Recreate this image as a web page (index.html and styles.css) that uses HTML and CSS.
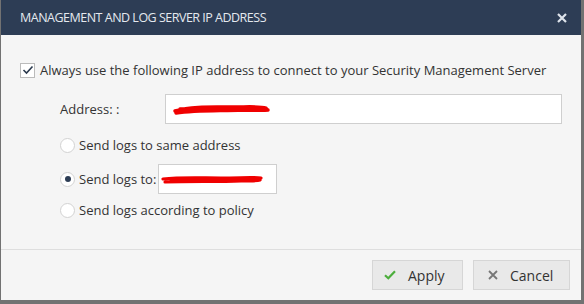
FILE: index.html
```html
<!DOCTYPE html>
<html lang="en">
  <head>
    <meta charset="UTF-8" />
    <title>Management and Log Server IP Address</title>
    <link rel="stylesheet" href="styles.css">
  </head>
  <body>
    <section class="dialog">
      <header class="titlebar">
        <h1>MANAGEMENT AND LOG SERVER IP ADDRESS</h1>
        <svg class="luk" width="10" height="10" viewBox="0 0 10 10"><path d="M1 1 L9 9 M9 1 L1 9" fill="none" stroke="#dfe5ec" stroke-width="2.2"/></svg>
      </header>

      <main class="indhold">
        <label class="række tjek">
          <span class="boks">
            <svg width="12" height="10" viewBox="0 0 12 10"><path d="M1.5 5 L4.5 8 L10.5 1.5" fill="none" stroke="#2b3a4e" stroke-width="1.6"/></svg>
          </span>
          Always use the following IP address to connect to your Security Management Server
        </label>

        <div class="adresse">
          <span class="etiket">Address: :</span>
          <div class="felt bred">
            <svg width="100" height="14" viewBox="0 0 100 14"><path d="M3 9 C20 4 40 5 60 5 C75 5 88 4 94 6 M4 11 C25 8 50 9 70 8 C80 8 90 9 96 8 M8 7 C30 6 60 4 90 7" fill="none" stroke="#f00000" stroke-width="3.4" stroke-linecap="round"/></svg>
          </div>
        </div>

        <label class="række radio r1"><span class="cirkel"></span>Send logs to same address</label>

        <label class="række radio r2">
          <span class="cirkel valgt"></span>Send logs to:
          <div class="felt smal">
            <svg width="104" height="14" viewBox="0 0 104 14"><path d="M2 7 C20 5 40 6 60 6 C80 6 92 5 100 6 M4 10 C30 9 55 10 80 9 C90 9 96 9 99 8 M10 8 C40 7 70 7 95 7" fill="none" stroke="#f00000" stroke-width="3.2" stroke-linecap="round"/></svg>
          </div>
        </label>

        <label class="række radio r3"><span class="cirkel"></span>Send logs according to policy</label>
      </main>

      <footer class="knapper">
        <button class="knap apply">
          <svg width="12" height="10" viewBox="0 0 12 10"><path d="M1 5.2 L4.3 8.3 L11 1.3" fill="none" stroke="#4cae3c" stroke-width="2.2"/></svg>
          Apply
        </button>
        <button class="knap cancel">
          <svg width="10" height="10" viewBox="0 0 10 10"><path d="M1 1 L9 9 M9 1 L1 9" fill="none" stroke="#777" stroke-width="1.8"/></svg>
          Cancel
        </button>
      </footer>
    </section>
  </body>
</html>
```

FILE: styles.css
```css
body {
  margin: 0;
  padding: 0;
  background-color: #727272;
  font-family: "Open Sans", "Liberation Sans", sans-serif;
  font-size: 13px;
  color: #333;
}

.dialog {
  margin-left: 1px;
  width: 580px;
  height: 300px;
  background-color: #f5f5f5;
  display: flex;
  flex-direction: column;
}

.titlebar {
  height: 35px;
  background-color: #2d3d55;
  display: flex;
  align-items: center;
  justify-content: space-between;
  padding: 0 14px 0 19px;
}
h1 {
  margin: 0;
  font-size: 12.5px;
  letter-spacing: -0.5px;
  font-weight: 400;
  color: #e4e9ef;
}

.indhold {
  flex: 1;
  padding: 26px 19px 0 19px;
}

.række {
  display: flex;
  align-items: center;
  line-height: 18px;
  height: 18px;
}
.tjek .boks {
  width: 13px;
  height: 13px;
  border: 1px solid #bbb;
  background-color: #fff;
  margin-right: 5px;
  display: flex;
  align-items: center;
  justify-content: center;
}

.adresse {
  display: flex;
  align-items: center;
  margin-top: 15px;
  padding-left: 40px;
}
.etiket {
  width: 105px;
}
.felt {
  border: 1px solid #cfcfcf;
  background-color: #fff;
  display: flex;
  align-items: center;
}
.bred {
  padding-left: 6px;
  box-sizing: border-box;
  width: 399px;
  height: 30px;
}
.smal {
  width: 119px;
  height: 30px;
  box-sizing: border-box;
  margin-left: 2px;
  padding-left: 2px;
}

.radio {
  padding-left: 40px;
}
.r1 {
  margin-top: 12px;
}
.r2 {
  margin-top: 10px;
  height: 30px;
}
.r3 {
  margin-top: 7px;
}
.cirkel {
  width: 15px;
  height: 15px;
  box-sizing: border-box;
  border: 1px solid #d2d2d2;
  border-radius: 50%;
  background-color: #fff;
  margin-right: 4px;
  position: relative;
}
.cirkel.valgt::after {
  content: "";
  position: absolute;
  left: 3.5px;
  top: 3.5px;
  width: 6px;
  height: 6px;
  border-radius: 50%;
  background-color: #2d3d55;
}

.knapper {
  height: 51px;
  box-sizing: border-box;
  border-top: 1px solid #dedede;
  display: flex;
  justify-content: flex-end;
  align-items: flex-start;
  gap: 10px;
  padding: 10px 11px 0 0;
}
.knap {
  height: 30px;
  border: 1px solid #d6d6d6;
  background-color: #e9e9e9;
  font-family: "Open Sans", "Liberation Sans", sans-serif;
  font-size: 14px;
  color: #333;
  display: flex;
  align-items: center;
  padding: 0 0 0 11px;
}
.knap svg {
  margin-right: 12px;
}
.apply {
  width: 91px;
}
.cancel {
  width: 97px;
  padding-left: 14px;
}
```
